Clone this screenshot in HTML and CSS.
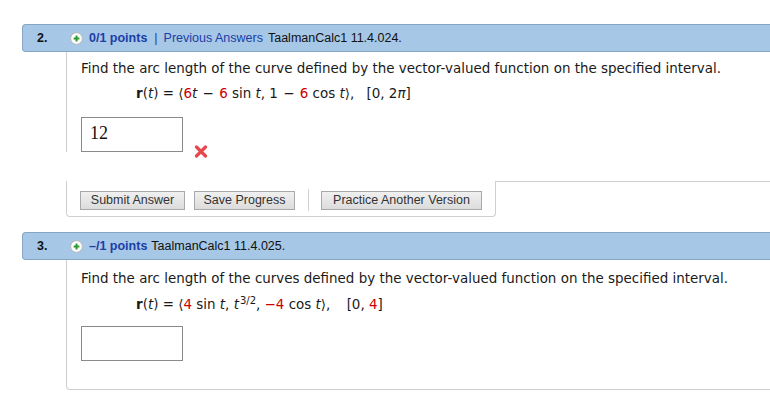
FILE: index.html
```html
<!DOCTYPE html>
<html>
<head>
<meta charset="utf-8">
<link rel="stylesheet" href="styles.css">
</head>
<body>
<div class="page">
  <div class="question q1">
    <div class="qhead">
      <span class="qnum">2.</span>
      <svg class="plus" width="13" height="13" viewBox="0 0 13 13"><circle cx="6.5" cy="6.5" r="5.8" fill="#fff" stroke="#b8b8b8" stroke-width="1"/><path d="M6.5 3.6v5.8M3.6 6.5h5.8" stroke="#2f9a2f" stroke-width="2"/></svg>
      <span class="pts">0/1 points</span>
      <span class="bar">|</span>
      <span class="link">Previous Answers</span>
      <span class="src">TaalmanCalc1 11.4.024.</span>
    </div>
    <div class="qbody">
      <div class="prompt">Find the arc length of the curve defined by the vector-valued function on the specified interval.</div>
      <div class="math"><b>r</b>(<i>t</i>) = ⟨<span class="red">6</span><i>t</i> <span class="op">−</span> <span class="red">6</span> sin <i>t</i>, 1 <span class="op">−</span> <span class="red">6</span> cos <i>t</i>⟩, <span class="gap"></span>[0, 2<i>π</i>]</div>
      <div class="answer">
        <div class="inbox">12</div>
        <svg class="xmark" width="14" height="13" viewBox="0 0 14 13"><path d="M2.5 2l9 9M11.5 2l-9 9" stroke="#e5484d" stroke-width="3.2" stroke-linecap="round"/></svg>
      </div>
    </div>
    <div class="btnrow">
      <div class="btnbar">
        <span class="btn w1">Submit Answer</span>
        <span class="btn w2">Save Progress</span>
        <span class="sep"></span>
        <span class="btn w3">Practice Another Version</span>
      </div>
      <div class="filler"></div>
    </div>
  </div>

  <div class="question q2">
    <div class="qhead">
      <span class="qnum">3.</span>
      <svg class="plus" width="13" height="13" viewBox="0 0 13 13"><circle cx="6.5" cy="6.5" r="5.8" fill="#fff" stroke="#b8b8b8" stroke-width="1"/><path d="M6.5 3.6v5.8M3.6 6.5h5.8" stroke="#2f9a2f" stroke-width="2"/></svg>
      <span class="pts">–/1 points</span>
      <span class="src">TaalmanCalc1 11.4.025.</span>
    </div>
    <div class="qbody last">
      <div class="prompt">Find the arc length of the curves defined by the vector-valued function on the specified interval.</div>
      <div class="math"><b>r</b>(<i>t</i>) = ⟨<span class="red">4</span> sin <i>t</i>, <i>t</i><sup>3/2</sup>, <span class="red">−4</span> cos <i>t</i>⟩, <span class="gap g2"></span>[0, <span class="red">4</span>]</div>
      <div class="answer">
        <div class="inbox"></div>
      </div>
    </div>
  </div>
</div>
</body>
</html>
```

FILE: styles.css
```css
html, body {
  margin: 0;
  padding: 0;
  background: #fff;
  overflow: hidden;
}
.page {
  width: 820px;
  padding: 24px 0 0 22px;
}
.qhead {
  display: flex;
  align-items: center;
  height: 26px;
  background: #a6c7e6;
  border: 1px solid #86a5c3;
  border-right: none;
  border-radius: 4px 0 0 4px;
  font-family: "Liberation Sans", Arial, sans-serif;
  font-size: 12.5px;
  color: #111;
}
.qnum {
  font-weight: bold;
  width: 33px;
  padding-left: 14px;
}
.plus {
  margin-right: 6px;
}
.pts {
  font-weight: bold;
  color: #1c3ea5;
  margin-right: 7px;
}
.q2 .pts {
  margin-right: 4px;
}
.bar {
  color: #1c3ea5;
  margin-right: 6px;
}
.link {
  color: #1c3ea5;
  margin-right: 5px;
}
.src {
  color: #111;
}
.qbody {
  margin-left: 44px;
  border-left: 1px solid #cfcfcf;
  padding: 9px 0 0 14px;
  font-family: "DejaVu Sans", Verdana, sans-serif;
  font-size: 13.45px;
  color: #1a1a1a;
}
.qbody.last {
  border-bottom: 1px solid #cfcfcf;
  border-bottom-left-radius: 4px;
  padding-top: 11px;
  padding-bottom: 28px;
}
.prompt {
  line-height: 16px;
}
.math {
  margin: 9px 0 0 55px;
  line-height: 16px;
}
.op {
  margin: 0 1px;
}
.gap {
  display: inline-block;
  width: 8px;
}
.gap.g2 {
  width: 12px;
}
.q2 .math {
  margin-top: 10px;
}
.math sup {
  font-size: 10px;
  line-height: 0;
  margin-left: 1px;
}
.red {
  color: #cc0000;
}
.answer {
  display: flex;
  align-items: flex-end;
  margin-top: 15px;
}
.q2 .answer {
  margin-top: 13px;
}
.inbox {
  box-sizing: border-box;
  width: 102px;
  height: 35px;
  border: 1px solid #8a8a8a;
  font-family: "Liberation Serif", "Times New Roman", serif;
  font-size: 18px;
  line-height: 30px;
  padding-left: 8px;
  color: #111;
}
.xmark {
  margin: 0 0 -6px 11px;
}
.q1 .answer {
  height: 35px;
}
.btnrow {
  display: flex;
  margin-left: 44px;
  margin-top: 29px;
}
.btnbar {
  display: flex;
  align-items: center;
  border: 1px solid #cfcfcf;
  border-top: none;
  border-radius: 0 0 4px 4px;
  padding: 8px 13px 5px 13px;
}
.btn {
  box-sizing: border-box;
  height: 19px;
  line-height: 17px;
  text-align: center;
  border: 1px solid #a9a9a9;
  background: linear-gradient(#f0f0f0, #dcdcdc);
  font-family: "Liberation Sans", Arial, sans-serif;
  font-size: 12.5px;
  color: #333;
}
.w1 { width: 105px; margin-right: 9px; }
.w2 { width: 101px; }
.w3 { width: 161px; }
.sep {
  width: 1px;
  height: 22px;
  background: #cfcfcf;
  margin: 0 12px 0 13px;
}
.filler {
  flex: 1;
  border-top: 1px solid #cfcfcf;
}
.q2 {
  margin-top: 15px;
}
```
